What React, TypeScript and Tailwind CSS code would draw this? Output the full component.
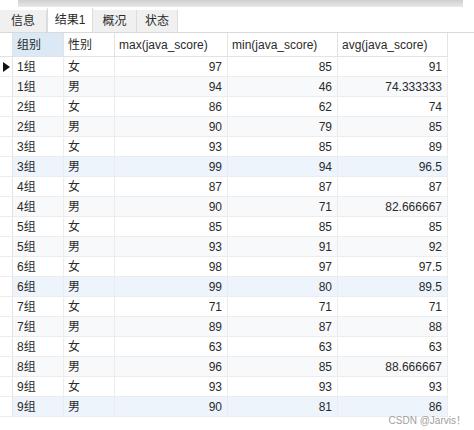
import React from "react";

type Row = [string, string, string, string, string];

const rows: Row[] = [
  ["1组", "女", "97", "85", "91"],
  ["1组", "男", "94", "46", "74.333333"],
  ["2组", "女", "86", "62", "74"],
  ["2组", "男", "90", "79", "85"],
  ["3组", "女", "93", "85", "89"],
  ["3组", "男", "99", "94", "96.5"],
  ["4组", "女", "87", "87", "87"],
  ["4组", "男", "90", "71", "82.666667"],
  ["5组", "女", "85", "85", "85"],
  ["5组", "男", "93", "91", "92"],
  ["6组", "女", "98", "97", "97.5"],
  ["6组", "男", "99", "80", "89.5"],
  ["7组", "女", "71", "71", "71"],
  ["7组", "男", "89", "87", "88"],
  ["8组", "女", "63", "63", "63"],
  ["8组", "男", "96", "85", "88.666667"],
  ["9组", "女", "93", "93", "93"],
  ["9组", "男", "90", "81", "86"],
];

const cols = "grid grid-cols-[13px_51px_51px_113px_110px_110px]";
const font = { fontFamily: '"Liberation Sans", "Noto Sans CJK SC", sans-serif' };

const tabs = ["信息", "结果1", "概况", "状态"];
const tabW = ["w-[47px]", "w-[46px]", "w-[44px]", "w-[41px]"];

export default function App() {
  return (
    <div className="relative h-[430px] w-[474px] overflow-hidden bg-white text-[12px] text-[#2a2a2a]" style={font}>
      <div className="ml-[18px] h-[7px] w-[445px] bg-gradient-to-b from-[#cfcfcf] to-[#e9e9e9]" />

      <div className="mt-[2px] flex h-[24px] items-end border-b border-[#dadada]">
        {tabs.map((t, i) => (
          <div
            key={t}
            className={`flex ${tabW[i]} items-center justify-center border-r border-[#dcdcdc] ${
              i === 1 ? "h-[24px] bg-white border-l" : "h-[22px] bg-[#f0f0f0]"
            }`}
          >
            {t}
          </div>
        ))}
        <div className="flex-1" />
        <div className="w-[11px]" />
      </div>

      <div className="w-[448px]">
        <div className={`${cols} h-[24px] border-b border-[#e3e3e3]`}>
          <div className="border-r border-[#e3e3e3]" />
          <div className="flex items-center border-r border-[#e3e3e3] bg-[#dbe8f6] px-[4px]">组别</div>
          <div className="flex items-center border-r border-[#e3e3e3] px-[4px]">性别</div>
          <div className="flex items-center border-r border-[#e3e3e3] px-[4px]">max(java_score)</div>
          <div className="flex items-center border-r border-[#e3e3e3] px-[4px]">min(java_score)</div>
          <div className="flex items-center border-r border-[#e3e3e3] px-[4px]">avg(java_score)</div>
        </div>
        {rows.map((r, i) => {
          const bg = i % 6 === 5 ? "bg-[#eef4fc]" : i % 2 === 1 ? "bg-[#f8f9fb]" : "bg-white";
          return (
            <div key={i} className={`${cols} h-[20px] border-b border-[#ececec] ${bg}`}>
              <div className="flex items-center border-r border-[#e3e3e3] bg-white pl-[3px]">
                {i === 0 && (
                  <svg width="7" height="10" viewBox="0 0 7 10">
                    <path d="M0 0 L7 5 L0 10 Z" fill="#111" />
                  </svg>
                )}
              </div>
              <div className="flex items-center border-r border-[#ececec] px-[4px]">{r[0]}</div>
              <div className="flex items-center border-r border-[#ececec] px-[4px]">{r[1]}</div>
              <div className="flex items-center justify-end border-r border-[#ececec] px-[5px]">{r[2]}</div>
              <div className="flex items-center justify-end border-r border-[#ececec] px-[5px]">{r[3]}</div>
              <div className="flex items-center justify-end border-r border-[#ececec] px-[5px]">{r[4]}</div>
            </div>
          );
        })}
      </div>

      <div className="absolute bottom-[2px] right-[8px] text-[10px] text-[#a0a0a0]">CSDN @Jarvis！</div>
    </div>
  );
}
